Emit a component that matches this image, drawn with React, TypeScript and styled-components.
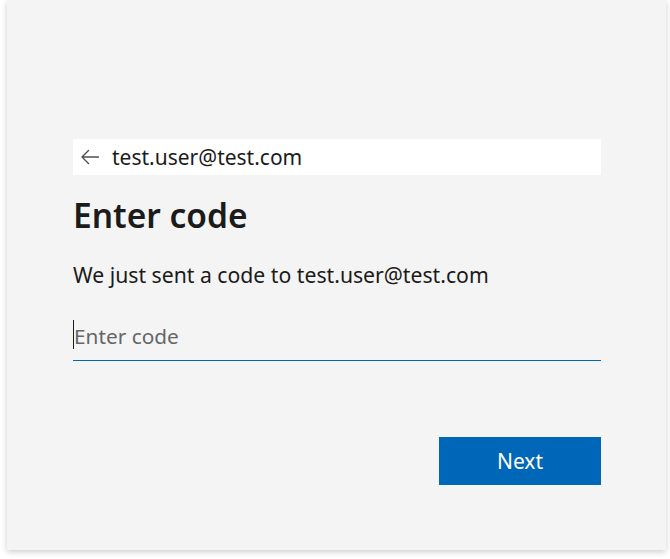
import styled, { createGlobalStyle } from "styled-components";

const GlobalStyle = createGlobalStyle`
  html, body {
    margin: 0;
    padding: 0;
    background: #ffffff;
  }
  body {
    font-family: "Segoe UI", "Noto Sans", "Open Sans", sans-serif;
    color: #1b1b1b;
  }
`;

export default function App() {
  return (
    <>
      <GlobalStyle />
      <Page>
        <Card>
          <Identity>
            <BackButton aria-label="Back">
              <svg width="24" height="24" viewBox="0 0 24 24" fill="none">
                <path
                  d="M20.5 12H4M10.5 5.5L4 12l6.5 6.5"
                  stroke="#505050"
                  strokeWidth="1.4"
                  strokeLinecap="round"
                  strokeLinejoin="round"
                />
              </svg>
            </BackButton>
            <IdentityText>test.user@test.com</IdentityText>
          </Identity>
          <Title>Enter code</Title>
          <Description>We just sent a code to test.user@test.com</Description>
          <Field>
            <Caret />
            <CodeInput type="text" placeholder="Enter code" />
          </Field>
          <Actions>
            <PrimaryButton type="button">Next</PrimaryButton>
          </Actions>
        </Card>
      </Page>
    </>
  );
}

const Page = styled.div`
  width: 670px;
  height: 559px;
  padding: 0 4px 9px 7px;
  box-sizing: border-box;
  overflow: hidden;
`;

const Card = styled.div`
  height: 550px;
  box-sizing: border-box;
  background: #f4f4f4;
  box-shadow: 0 2px 6px rgba(0, 0, 0, 0.2);
  padding: 139px 65px 0 66px;
  display: flex;
  flex-direction: column;
`;

const Identity = styled.div`
  display: flex;
  align-items: center;
  height: 36px;
  background: #ffffff;
  padding-left: 5px;
`;

const BackButton = styled.div`
  display: flex;
  align-items: center;
  justify-content: center;
  width: 24px;
  height: 24px;
  margin-right: 10px;
`;

const IdentityText = styled.span`
  font-size: 21px;
  line-height: 36px;
  color: #1b1b1b;
`;

const Title = styled.h1`
  margin: 19px 0 0;
  font-size: 33.5px;
  line-height: 42px;
  font-weight: 600;
  color: #1b1b1b;
`;

const Description = styled.p`
  margin: 24px 0 0;
  font-size: 21.2px;
  line-height: 30px;
  color: #1b1b1b;
`;

const Field = styled.div`
  position: relative;
  margin-top: 25px;
  border-bottom: 1px solid #0067b8;
`;

const Caret = styled.span`
  position: absolute;
  left: 0;
  top: 5px;
  width: 1px;
  height: 29px;
  background: #1b1b1b;
`;

const CodeInput = styled.input`
  display: block;
  width: 100%;
  box-sizing: border-box;
  height: 45px;
  padding: 0 0 3px 1px;
  border: 0;
  background: transparent;
  font-family: inherit;
  font-size: 20.8px;
  color: #1b1b1b;
  outline: none;
  &::placeholder {
    color: #666666;
  }
`;

const Actions = styled.div`
  display: flex;
  justify-content: flex-end;
  margin-top: 76px;
`;

const PrimaryButton = styled.button`
  width: 162px;
  height: 48px;
  border: none;
  background: #0067b8;
  color: #ffffff;
  font-family: inherit;
  font-size: 21px;
  cursor: pointer;
`;
